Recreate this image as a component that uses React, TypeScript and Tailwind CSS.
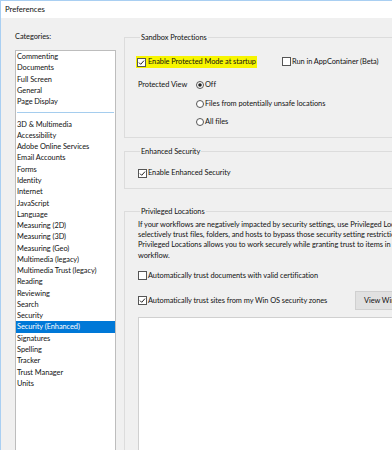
import type { ReactNode } from "react";

const categories: (string | null)[] = [
  "Commenting",
  "Documents",
  "Full Screen",
  "General",
  "Page Display",
  null,
  "3D & Multimedia",
  "Accessibility",
  "Adobe Online Services",
  "Email Accounts",
  "Forms",
  "Identity",
  "Internet",
  "JavaScript",
  "Language",
  "Measuring (2D)",
  "Measuring (3D)",
  "Measuring (Geo)",
  "Multimedia (legacy)",
  "Multimedia Trust (legacy)",
  "Reading",
  "Reviewing",
  "Search",
  "Security",
  "Security (Enhanced)",
  "Signatures",
  "Spelling",
  "Tracker",
  "Trust Manager",
  "Units",
];

const SELECTED = "Security (Enhanced)";

function Check({ on }: { on?: boolean }) {
  return (
    <svg width="9" height="9" viewBox="0 0 9 9" className="shrink-0">
      <rect x="0.5" y="0.5" width="8" height="8" fill="#fff" stroke="#555" />
      {on && (
        <polyline
          points="2,4.6 3.7,6.3 7,2.6"
          fill="none"
          stroke="#222"
          strokeWidth="1"
        />
      )}
    </svg>
  );
}

function Radio({ on }: { on?: boolean }) {
  return (
    <svg width="8" height="8" viewBox="0 0 8 8" className="shrink-0">
      <circle cx="4" cy="4" r="3.5" fill="#fff" stroke="#555" />
      {on && <circle cx="4" cy="4" r="1.8" fill="#222" />}
    </svg>
  );
}

function Group({
  title,
  className,
  children,
}: {
  title: string;
  className?: string;
  children: ReactNode;
}) {
  return (
    <fieldset
      className={`w-[300px] border border-[#dcdcdc] pl-[13px] ${className ?? ""}`}
    >
      <legend className="ml-[2px] px-[1px] leading-[11px]">{title}</legend>
      {children}
    </fieldset>
  );
}

export default function App() {
  return (
    <div
      className="relative h-[450px] w-[392px] overflow-hidden border-l border-t border-[#a9cff2] bg-[#f0f0f0] text-[7.4px] tracking-[-0.05px] text-[#111]"
      style={{ fontFamily: 'Lato, "Noto Sans", sans-serif' }}
    >
      <div className="flex h-[17px] items-center bg-white pl-[4px] text-[7.8px]">
        Preferences
      </div>

      <div className="flex">
        {/* categories */}
        <div className="w-[123px] shrink-0 pl-[14px] pt-[13px]">
          <div className="leading-[11px]">Categories:</div>
          <div className="mt-[8px] h-[420px] w-[101px] border border-[#bdbdbd] bg-white">
            {categories.map((c, i) =>
              c === null ? (
                <div key={i} className="flex h-[11.28px] items-center px-[1px]">
                  <div className="h-[1px] w-full bg-[#a5cdee]" />
                </div>
              ) : (
                <div
                  key={c}
                  className={`flex h-[11.28px] items-center whitespace-nowrap pl-[1px] ${
                    c === SELECTED ? "bg-[#0078d7] text-white" : ""
                  }`}
                >
                  {c}
                </div>
              ),
            )}
          </div>
        </div>

        {/* settings */}
        <div className="min-w-0 flex-1 overflow-hidden">
          <Group title="Sandbox Protections" className="mt-[14px] pb-[9px]">
            <div className="mt-[13px] flex h-[12px] items-center whitespace-nowrap">
              <div className="-ml-[2px] flex h-[12px] w-[121px] items-center gap-[2px] bg-[#f7f500] pl-[1px]">
                <Check on />
                <span>Enable Protected Mode at startup</span>
              </div>
              <div className="ml-[25px] flex items-center gap-[1px]">
                <Check />
                <span>Run in AppContainer (Beta)</span>
              </div>
            </div>
            <div className="mt-[11px] flex whitespace-nowrap">
              <div className="flex h-[12px] w-[58px] items-center">Protected View</div>
              <div className="flex flex-col">
                <div className="flex h-[12px] items-center gap-[1px]">
                  <Radio on />
                  <span>Off</span>
                </div>
                <div className="mt-[7px] flex h-[12px] items-center gap-[1px]">
                  <Radio />
                  <span>Files from potentially unsafe locations</span>
                </div>
                <div className="mt-[6px] flex h-[12px] items-center gap-[1px]">
                  <Radio />
                  <span>All files</span>
                </div>
              </div>
            </div>
          </Group>

          <Group title="Enhanced Security" className="mt-[8px] pb-[9px]">
            <div className="mt-[10px] flex h-[12px] items-center gap-[1px] whitespace-nowrap">
              <Check on />
              <span>Enable Enhanced Security</span>
            </div>
          </Group>

          <Group title="Privileged Locations" className="mt-[17px] h-[260px]">
            <div className="mt-[3px] whitespace-nowrap leading-[10.23px]">
              <div>
                If your workflows are negatively impacted by security settings, use Privileged Locations to
              </div>
              <div>
                selectively trust files, folders, and hosts to bypass those security setting restrictions.
              </div>
              <div>
                Privileged Locations allows you to work securely while granting trust to items in your
              </div>
              <div>workflow.</div>
            </div>
            <div className="mt-[9px] flex h-[12px] items-center gap-[1px] whitespace-nowrap">
              <Check />
              <span>Automatically trust documents with valid certification</span>
            </div>
            <div className="mt-[9px] flex h-[19px] items-center whitespace-nowrap">
              <div className="flex w-[217px] items-center gap-[1px]">
                <Check on />
                <span>Automatically trust sites from my Win OS security zones</span>
              </div>
              <button className="flex h-[19px] items-center border border-[#d0d0d0] bg-[#e1e1e1] px-[8px] text-[7.4px]">
                View Windows Security Settings
              </button>
            </div>
            <div className="mt-[7px] h-[200px] w-[280px] border border-[#d0d0d0] bg-white" />
          </Group>
        </div>
      </div>
    </div>
  );
}
